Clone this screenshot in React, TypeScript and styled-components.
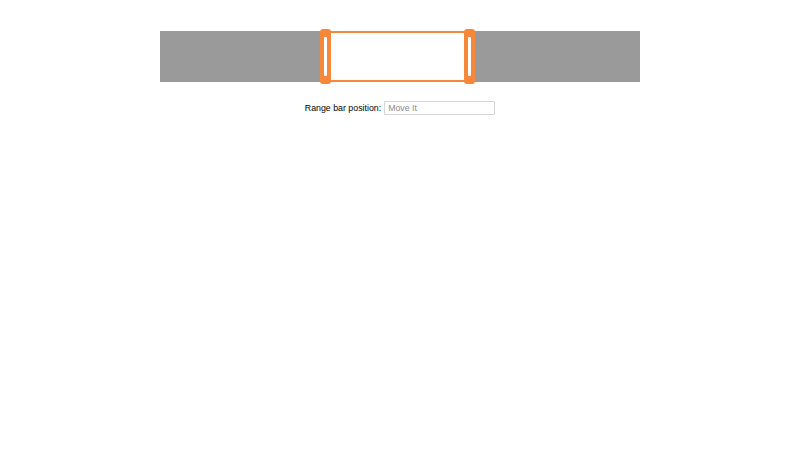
import React from "react";
import styled, { createGlobalStyle } from "styled-components";

const Global = createGlobalStyle`
  html, body { margin: 0; padding: 0; background: #fff; }
  body { font-family: "Liberation Sans", Arial, sans-serif; }
`;

const Page = styled.div`
  padding-top: 31px;
  display: flex;
  flex-direction: column;
  align-items: center;
`;

const Track = styled.div`
  position: relative;
  width: 480px;
  height: 51px;
  background: #9a9a9a;
`;

const Range = styled.div<{ $left: number; $width: number }>`
  position: absolute;
  top: -2px;
  left: ${(p) => p.$left}px;
  width: ${(p) => p.$width}px;
  height: 55px;
  display: flex;
  align-items: center;
`;

const Handle = styled.div`
  position: relative;
  z-index: 1;
  flex: 0 0 11px;
  width: 11px;
  height: 55px;
  border-radius: 3px;
  background: #f5883a;
  display: flex;
  align-items: center;
  justify-content: center;
`;

const Slit = styled.div`
  width: 3px;
  height: 39px;
  border-radius: 1px;
  background: #fff;
`;

const Frame = styled.div`
  flex: 1 1 auto;
  height: 51px;
  box-sizing: border-box;
  border-top: 2px solid #f5883a;
  border-bottom: 2px solid #f5883a;
  background: #fff;
`;

const Row = styled.div`
  margin-top: 19px;
  display: flex;
  align-items: center;
  gap: 3px;
  color: #000;
`;

const Label = styled.label`
  font-size: 8.8px;
  line-height: 14px;
`;

const Input = styled.input`
  width: 111px;
  height: 14px;
  box-sizing: border-box;
  border: 1px solid #d6d6d6;
  border-radius: 1px;
  padding: 0 3px;
  font-family: "Liberation Sans", Arial, sans-serif;
  font-size: 8.8px;
  background: #fff;
  outline: none;
  &::placeholder { color: #8a8a8a; }
`;

export default function App() {
  return (
    <>
      <Global />
      <Page>
        <Track>
          <Range $left={160} $width={155}>
            <Handle><Slit /></Handle>
            <Frame />
            <Handle><Slit /></Handle>
          </Range>
        </Track>
        <Row>
          <Label htmlFor="pos">Range bar position:</Label>
          <Input id="pos" placeholder="Move It" />
        </Row>
      </Page>
    </>
  );
}
